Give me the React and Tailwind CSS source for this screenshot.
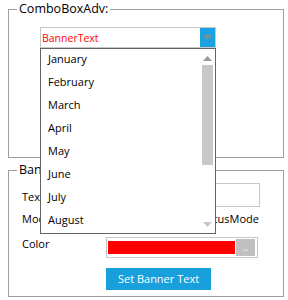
import React from "react";

const months = ["January", "February", "March", "April", "May", "June", "July", "August"];

export default function App() {
  return (
    <div className="relative w-[288px] h-[300px] bg-white overflow-hidden text-[11px] text-black font-['Open_Sans',sans-serif] leading-[18px]">
      <fieldset className="ml-[8px] w-[276px] h-[158px] border border-[#a0a0a0] p-0 m-0">
        <legend className="ml-[8px] px-[2px] leading-[18px] text-[12.5px]">ComboBoxAdv:</legend>
        <div className="relative ml-[31px] mt-[9px] w-[176px]">
          <div className="flex h-[21px] border border-[#c8c8c8] items-center">
            <span className="flex-1 pl-[1px] text-[#ff0000] text-[10.5px]">BannerText</span>
            <div className="w-[15px] h-[19px] bg-[#1ba1e2] flex items-center justify-center">
              <svg width="9" height="5" viewBox="0 0 9 5"><path d="M0 0H9L4.5 5Z" fill="#8a8a8a" /></svg>
            </div>
          </div>
          <div className="absolute left-0 top-[21px] z-10 w-[176px] h-[186px] border border-[#646464] bg-white flex">
            <ul className="flex-1 pl-[7px] -mt-[2px]">
              {months.map((m) => (
                <li key={m} className="h-[23px] leading-[23px]">{m}</li>
              ))}
            </ul>
            <div className="w-[11px] mr-[2px] flex flex-col items-center">
              <svg className="mt-[7px]" width="9" height="5" viewBox="0 0 9 5"><path d="M0 5H9L4.5 0Z" fill="#9a9a9a" /></svg>
              <div className="mt-[4px] w-[11px] h-[100px] bg-[#c8c8c8]" />
              <svg className="mt-[57px]" width="9" height="5" viewBox="0 0 9 5"><path d="M0 0H9L4.5 5Z" fill="#c8c8c8" /></svg>
            </div>
          </div>
        </div>
      </fieldset>
      <fieldset className="ml-[8px] mt-[3px] w-[276px] h-[136px] border border-[#a0a0a0] p-0 m-0">
        <legend className="ml-[8px] px-[2px] leading-[18px] text-[12.5px]">Banner Text Settings</legend>
        <div className="ml-[13px] mt-[4px] flex flex-col">
          <div className="flex h-[24px] items-center">
            <span className="w-[84px] pt-[3px]">Text</span>
            <div className="w-[154px] h-[24px] border border-[#c8c8c8]" />
          </div>
          <div className="flex h-[24px] items-center">
            <span className="w-[84px]">Mode</span>
            <span className="w-[153px] text-right">FocusMode</span>
          </div>
          <div className="flex mt-[6px] h-[21px] items-start">
            <span className="w-[84px] leading-[14px]">Color</span>
            <div className="w-[152px] h-[21px] border border-[#c8c8c8] flex items-start">
              <div className="ml-[1px] mt-[3px] w-[127px] h-[13px] bg-[#ff0000]" />
              <div className="ml-[1px] mt-[1px] w-[19px] h-[17px] bg-[#c0c0c0] text-white text-[10px] leading-[17px] text-center">..</div>
            </div>
          </div>
          <button className="mt-[10px] ml-[84px] w-[105px] h-[22px] bg-[#17a0dc] text-white text-[11px] leading-[22px]">Set Banner Text</button>
        </div>
      </fieldset>
    </div>
  );
}
